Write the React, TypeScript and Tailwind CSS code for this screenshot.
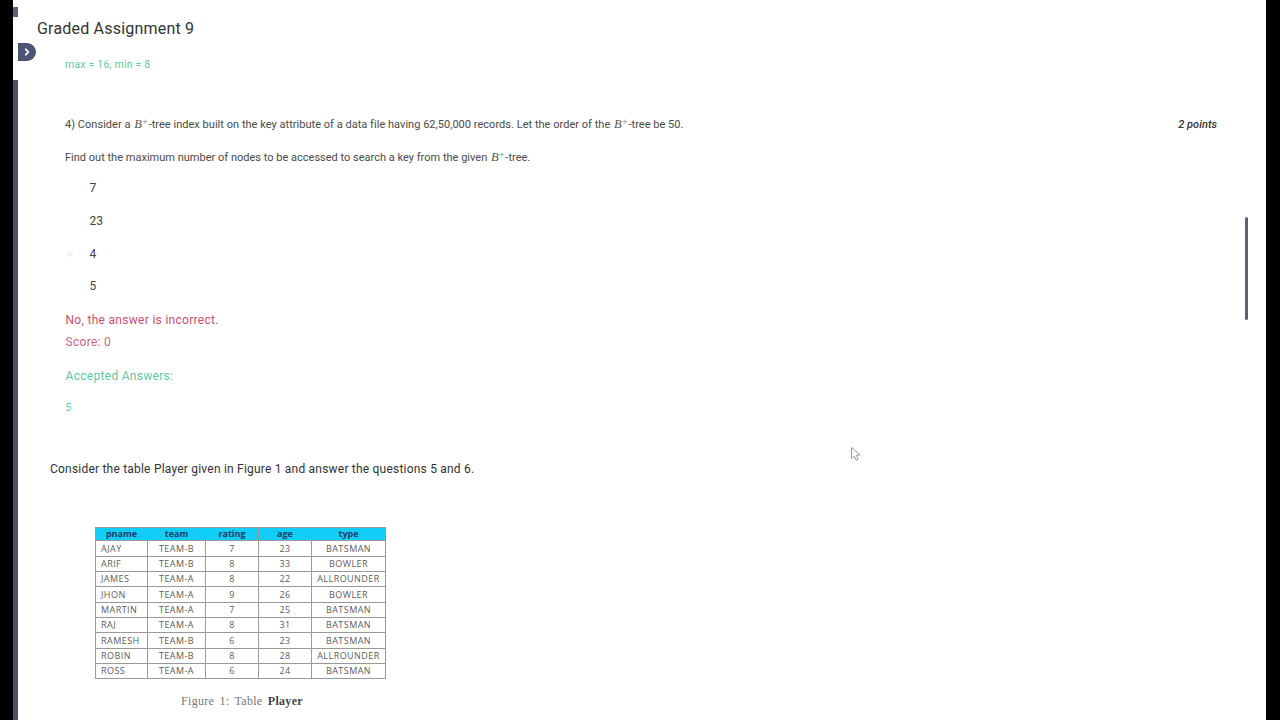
const rows = [
  ["AJAY", "TEAM-B", "7", "23", "BATSMAN"],
  ["ARIF", "TEAM-B", "8", "33", "BOWLER"],
  ["JAMES", "TEAM-A", "8", "22", "ALLROUNDER"],
  ["JHON", "TEAM-A", "9", "26", "BOWLER"],
  ["MARTIN", "TEAM-A", "7", "25", "BATSMAN"],
  ["RAJ", "TEAM-A", "8", "31", "BATSMAN"],
  ["RAMESH", "TEAM-B", "6", "23", "BATSMAN"],
  ["ROBIN", "TEAM-B", "8", "28", "ALLROUNDER"],
  ["ROSS", "TEAM-A", "6", "24", "BATSMAN"],
];

function BPlus() {
  return (
    <span className="ml-[1px] whitespace-nowrap">
      <span className="font-['Liberation_Serif',serif] italic text-[12.5px] tracking-[0.6px] text-[#555]">B</span>
      <span className="relative top-[-3px] mr-[1px] text-[9px] leading-[8px] text-[#aaa]">+</span>
    </span>
  );
}

export default function App() {
  return (
    <div className="flex h-[720px] w-[1280px] overflow-hidden bg-black font-['Roboto',sans-serif]">
      <div className="w-[13px] shrink-0 bg-black" />
      <div className="flex w-[5px] shrink-0 flex-col">
        <div className="h-[7px] bg-white" />
        <div className="h-[10px] bg-[#5a6274]" />
        <div className="h-[63px] bg-white" />
        <div className="flex-1 bg-[#4b5264]" />
      </div>
      <main className="relative flex-1 overflow-hidden bg-white">
        <button className="absolute left-0 top-[43px] flex h-[18px] w-[18px] items-center justify-center rounded-r-[9px] bg-[#4b5574]">
          <svg width="8" height="8" viewBox="0 0 8 8" fill="none" stroke="#fff" strokeWidth="1.8" strokeLinecap="round" strokeLinejoin="round">
            <path d="M2.8 1.3 5.4 4 2.8 6.7" />
          </svg>
        </button>
        <div className="absolute left-[1227px] top-[217px] h-[103px] w-[3px] rounded-full bg-[#5a6274]" />
        <svg className="absolute left-[832px] top-[446px]" width="12" height="16" viewBox="0 0 12 16" fill="#fff" stroke="#999" strokeWidth="1">
          <path d="M1.5 1.5v11l2.8-2.4 1.8 4.2 2-.9-1.8-4.1 3.7-.3z" />
        </svg>

        <h1 className="ml-[19px] pt-[19px] text-[16px] leading-[20px] tracking-[0.2px] text-[#333]">Graded Assignment 9</h1>

        <div className="ml-[47px] mt-[20px] text-[10.5px] leading-[12px] tracking-[0.2px] text-[#5fc9a1]">max = 16, min = 8</div>

        <div className="ml-[47px] mr-[49px] mt-[46px] flex items-center justify-between text-[11px] leading-[14px] tracking-[0.03px] text-[#4a4a4a]">
          <p>4) Consider a <BPlus />-tree index built on the key attribute of a data file having 62,50,000 records. Let the order of the <BPlus />-tree be 50.</p>
          <span className="text-[11px] font-medium italic text-[#333]">2 points</span>
        </div>
        <p className="ml-[47px] mt-[18px] text-[11px] leading-[14px] tracking-[0.01px] text-[#4a4a4a]">Find out the maximum number of nodes to be accessed to search a key from the given <BPlus />-tree.</p>

        <ul className="ml-[71.5px] mt-[15px] flex flex-col gap-[16.8px] text-[12px] leading-[16px] text-[#444]">
          <li>7</li>
          <li>23</li>
          <li className="relative">
            <span className="absolute left-[-23px] top-[5px] h-[6px] w-[6px] rounded-full bg-[#f4f4f4]" />
            4
          </li>
          <li>5</li>
        </ul>

        <p className="ml-[47.5px] mt-[18px] text-[12px] leading-[16px] tracking-[0.3px] text-[#c9506f]">No, the answer is incorrect.</p>
        <p className="ml-[47.5px] mt-[6px] text-[12px] leading-[16px] tracking-[0.3px] text-[#c9667f]">Score: 0</p>
        <p className="ml-[47.5px] mt-[18px] text-[12px] leading-[16px] tracking-[0.3px] text-[#5fc9a1]">Accepted Answers:</p>
        <p className="ml-[47.5px] mt-[16px] text-[10px] leading-[16px] text-[#5fc9a1]">5</p>

        <p className="ml-[32px] mt-[45px] text-[12px] leading-[16px] tracking-[0.21px] text-[#333]">Consider the table Player given in Figure 1 and answer the questions 5 and 6.</p>

        <div className="ml-[77px] mt-[50px] w-[290px]">
          <table className="h-[152px] w-[290px] table-fixed border-collapse border border-[#999] font-['Open_Sans',sans-serif] text-[9px] leading-[12px] tracking-[0.45px] text-[#5c5c5c]">
            <colgroup>
              <col className="w-[52px]" />
              <col className="w-[58px]" />
              <col className="w-[53px]" />
              <col className="w-[53px]" />
              <col className="w-[74px]" />
            </colgroup>
            <thead>
              <tr className="bg-[#12cdf6] text-[#1f3f66]">
                {["pname", "team", "rating", "age", "type"].map((h) => (
                  <th key={h} className="border border-[#999] p-0 text-center font-bold tracking-normal">{h}</th>
                ))}
              </tr>
            </thead>
            <tbody>
              {rows.map((r) => (
                <tr key={r[0]}>
                  {r.map((c, i) => (
                    <td key={i} className={`border border-[#999] p-0 ${i === 0 ? "pl-[5px] text-left" : "text-center"}`}>{c}</td>
                  ))}
                </tr>
              ))}
            </tbody>
          </table>
          <div className="mt-[15px] pl-[4px] text-center font-['Liberation_Serif',serif] text-[12px] leading-[14px] tracking-[0.3px] [word-spacing:2px] text-[#777]">
            Figure 1: Table <b className="text-[#444]">Player</b>
          </div>
        </div>
      </main>
      <div className="w-[14px] shrink-0 bg-black" />
    </div>
  );
}
